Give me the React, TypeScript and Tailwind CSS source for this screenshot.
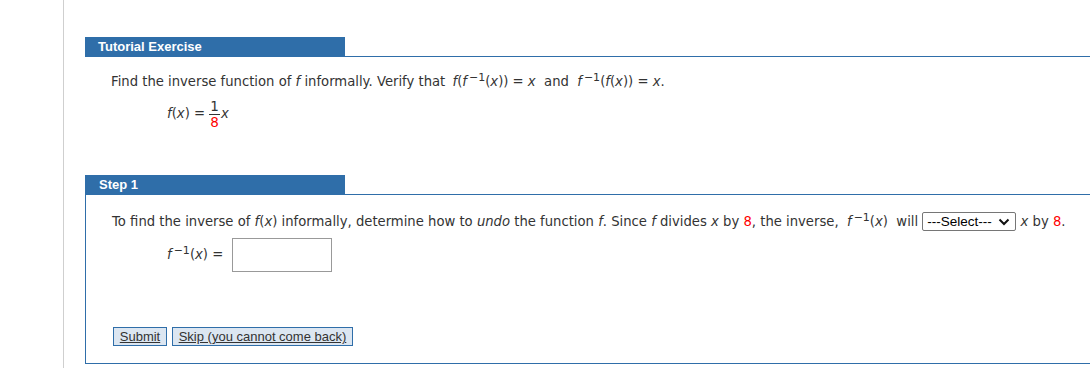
import React from "react";

const BLUE = "border-[#2f6ea9]";

function F({ children }: { children: React.ReactNode }) {
  return <span className="italic">{children}</span>;
}

function Inv() {
  return (
    <span className="whitespace-nowrap">
      <F>f</F>
      <sup className="text-[11px] top-[-0.45em] ml-[2px]">−1</sup>
    </span>
  );
}

export default function App() {
  return (
    <div className="w-[1090px] h-[368px] overflow-hidden bg-white flex text-[#333]">
      <div className="w-[63px] shrink-0" />
      <div className="w-px shrink-0 bg-[#cfcfcf]" />
      <div className="flex-1 pl-[21px] pt-[37px] font-['DejaVu_Sans',Verdana,sans-serif] text-[13.2px]">
        {/* Tutorial Exercise */}
        <div className={`flex border-b ${BLUE} h-[20px]`}>
          <div className="w-[260px] h-[20px] bg-[#2f6ea9] text-white font-bold font-['Liberation_Sans',Arial,sans-serif] text-[13px] leading-[20px] pl-[13px]">
            Tutorial Exercise
          </div>
        </div>
        <div className="pl-[26px] pt-[17px] leading-[16px]">
          Find the inverse function of <F>f</F> informally. Verify that{" "}
          <span className="ml-[3px]">
            <F>f</F>(<Inv />(<F>x</F>)) = <F>x</F>
          </span>
          &nbsp; and &nbsp;
          <span>
            <Inv />(<F>f</F>(<F>x</F>)) = <F>x</F>.
          </span>
        </div>
        <div className="pl-[82px] pt-[9px] flex items-center h-[38px]">
          <span>
            <F>f</F>(<F>x</F>) =
          </span>
          <span className="inline-flex flex-col items-center ml-[4px] mr-[1px] leading-[14px] text-[13.5px]">
            <span className="px-[1px]">1</span>
            <span className="w-[11px] border-t border-[#333] mt-[1px]" />
            <span className="text-[#ff0000]">8</span>
          </span>
          <F>x</F>
        </div>

        {/* Step 1 */}
        <div className="mt-[47px]">
          <div className={`flex border-b ${BLUE} h-[20px]`}>
            <div className="w-[260px] h-[20px] bg-[#2f6ea9] text-white font-bold font-['Liberation_Sans',Arial,sans-serif] text-[13px] leading-[20px] pl-[14px]">
              Step 1
            </div>
          </div>
          <div className={`border-l border-b ${BLUE} h-[169px] pl-[26px] pt-[17px]`}>
            <div className="leading-[16px] whitespace-nowrap">
              To find the inverse of <F>f</F>(<F>x</F>) informally, determine how to{" "}
              <F>undo</F> the function <F>f</F>. Since <F>f</F> divides <F>x</F> by{" "}
              <span className="text-[#ff0000]">8</span>, the inverse,&nbsp; <Inv />(
              <F>x</F>)&nbsp; will{" "}
              <span className="inline-flex items-center justify-between align-middle w-[94px] h-[19px] border border-[#767676] rounded-[2px] pl-[4px] pr-[5px] font-['Liberation_Sans',Arial,sans-serif] text-[13.5px] text-black">
                <span>---Select---</span>
                <svg width="12" height="8" viewBox="0 0 12 8" className="ml-[3px]">
                  <path d="M1.5 1.5 L6 6 L10.5 1.5" fill="none" stroke="#111" strokeWidth="2" />
                </svg>
              </span>{" "}
              <F>x</F> by <span className="text-[#ff0000]">8</span>.
            </div>
            <div className="flex items-center pl-[55px] mt-[7px]">
              <span>
                <Inv />(<F>x</F>) =
              </span>
              <div className="ml-[9px] w-[100px] h-[34px] border border-[#999]" />
            </div>
            <div className="flex gap-[5px] pl-[1px] mt-[55px] font-['Liberation_Sans',Arial,sans-serif] text-[13px] leading-[17px] whitespace-nowrap">
              <div className={`border ${BLUE} bg-[#dce6f1] px-[5px] underline h-[19px] w-[54px] text-center`}>
                Submit
              </div>
              <div className={`border ${BLUE} bg-[#dce6f1] px-[5px] underline h-[19px] w-[181px] text-center`}>
                Skip (you cannot come back)
              </div>
            </div>
          </div>
        </div>
      </div>
    </div>
  );
}
